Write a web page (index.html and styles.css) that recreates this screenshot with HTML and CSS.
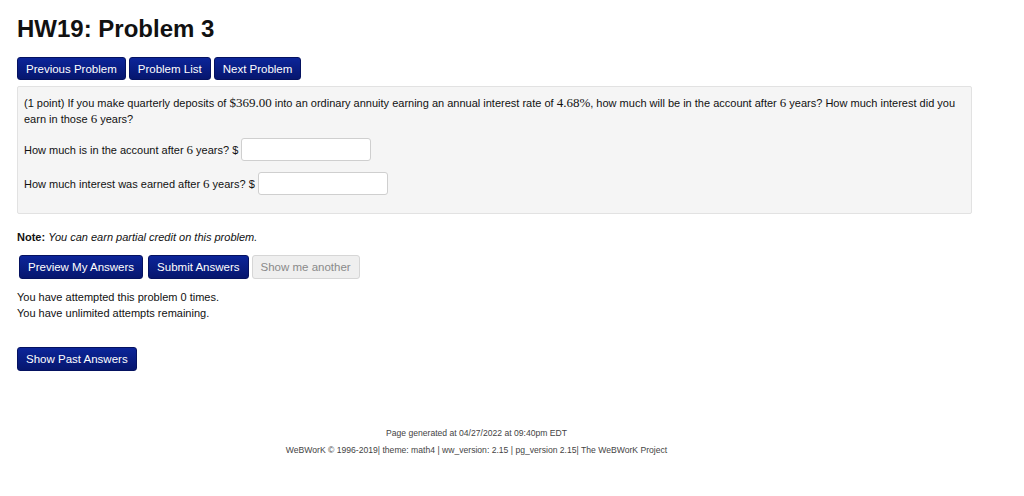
FILE: index.html
```html
<!DOCTYPE html>
<html>
<head>
<meta charset="utf-8">
<link rel="stylesheet" href="styles.css">
</head>
<body>
<div class="page">
  <h1 class="title">HW19: Problem 3</h1>
  <div class="nav">
    <button class="btn primary">Previous Problem</button>
    <button class="btn primary">Problem List</button>
    <button class="btn primary">Next Problem</button>
  </div>
  <div class="problem">
    <p class="statement">(1 point) If you make quarterly deposits of <span class="m">$369.00</span> into an ordinary annuity earning an annual interest rate of <span class="m">4.68%</span>, how much will be in the account after <span class="m">6</span> years? How much interest did you earn in those <span class="m">6</span> years?</p>
    <div class="q">How much is in the account after <span class="m">6</span> years? $ <input class="ans" type="text"></div>
    <div class="q">How much interest was earned after <span class="m">6</span> years? $ <input class="ans" type="text"></div>
  </div>
  <p class="note"><b>Note:</b> <i>You can earn partial credit on this problem.</i></p>
  <div class="submit-row">
    <button class="btn primary big">Preview My Answers</button>
    <button class="btn primary big">Submit Answers</button>
    <button class="btn disabled big">Show me another</button>
  </div>
  <div class="attempts">
    <div>You have attempted this problem 0 times.</div>
    <div>You have unlimited attempts remaining.</div>
  </div>
  <div class="past">
    <button class="btn primary big">Show Past Answers</button>
  </div>
  <footer class="footer">
    <div>Page generated at 04/27/2022 at 09:40pm EDT</div>
    <div class="copy">WeBWorK © 1996-2019| theme: math4 | ww_version: 2.15 | pg_version 2.15| The WeBWorK Project</div>
  </footer>
</div>
</body>
</html>
```
FILE: styles.css
```css
html, body {
  margin: 0;
  padding: 0;
  background: #fff;
}
body {
  font-family: "Liberation Sans", Arial, sans-serif;
  color: #111;
  font-size: 11px;
}
.page {
  padding: 0 52px 0 17px;
}
.title {
  margin: 0;
  padding-top: 15px;
  font-size: 24px;
  font-weight: bold;
  line-height: 28px;
  color: #111;
}
.nav {
  display: flex;
  gap: 3px;
  margin-top: 14px;
}
.btn {
  font-family: "Liberation Sans", Arial, sans-serif;
  font-size: 11.5px;
  height: 23px;
  padding: 0 8px;
  border-radius: 3px;
  cursor: pointer;
}
.btn.primary {
  color: #fff;
  background: linear-gradient(#0c2599, #06166e);
  border: 1px solid #051260;
}
.btn.disabled {
  color: #8a8a8a;
  background: #efefef;
  border: 1px solid #d6d6d6;
}
.btn.big {
  height: 24px;
  padding: 0 8px;
}
.problem {
  margin-top: 6px;
  background: #f5f5f5;
  border: 1px solid #e2e2e2;
  border-radius: 2px;
  padding: 8px 6px 18px 6px;
}
.statement {
  margin: 0;
  line-height: 16px;
}
.m {
  font-family: "Liberation Serif", "Times New Roman", serif;
  font-size: 13px;
  line-height: 1;
}
.q {
  display: flex;
  align-items: center;
  gap: 3px;
  margin-top: 11px;
}
.ans {
  width: 130px;
  box-sizing: border-box;
  height: 23px;
  border: 1px solid #cfcfcf;
  border-radius: 3px;
  background: #fff;
  padding: 0 4px;
  margin: 0;
}
.note {
  margin: 16px 0 0 0;
  line-height: 14px;
}
.submit-row {
  display: flex;
  gap: 5px;
  margin: 11px 0 0 2px;
}
.submit-row .btn.disabled {
  margin-left: -2px;
}
.attempts {
  margin-top: 10px;
  line-height: 16px;
}
.past {
  margin-top: 26px;
}
.footer {
  margin: 54px 36px 0 0;
  text-align: center;
  font-size: 8.6px;
  color: #444;
  line-height: 17px;
}
```
